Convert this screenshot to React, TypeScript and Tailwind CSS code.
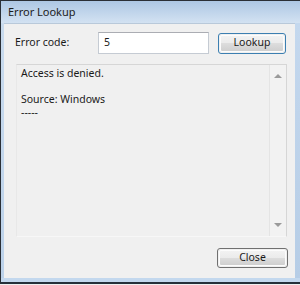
import React from "react";

const font = { fontFamily: '"Noto Sans", "Open Sans", sans-serif' };

function Btn({ label, w, h, def }: { label: string; w: string; h: string; def?: boolean }) {
  return (
    <div
      className={`${w} ${h} rounded-[3px] border ${def ? "border-[#3c7fb1]" : "border-[#707070]"} p-px`}
    >
      <div className="w-full h-full rounded-[2px] border border-[#fcfcfc] bg-[linear-gradient(to_bottom,#f2f2f2_0%,#ebebeb_50%,#dddddd_50%,#cfcfcf_100%)] flex items-center justify-center text-[10.5px] text-[#1a1a1a]">
        {label}
      </div>
    </div>
  );
}

export default function App() {
  return (
    <div className="w-[300px] h-[285px] bg-[#f0f0f0] flex flex-col" style={font}>
      <div className="w-full h-[284px] flex flex-col border-t border-l border-[#2a2f36] bg-[#c9dbee]">
        {/* title bar */}
        <div className="h-[22px] bg-[linear-gradient(to_bottom,#adc7e4,#d3e2f2)] flex items-center pl-[7px] text-[11px] text-[#1c1c1c] shrink-0">
          Error Lookup
        </div>
        <div className="flex-1 flex min-h-0">
          <div className="w-[3px] bg-[linear-gradient(to_bottom,#c9dbee,#bcd2ea)] shrink-0" />
          <div className="w-[291px] bg-[#f0f0f0] flex flex-col pt-[8px] pl-[11px] border-t border-[#b9c9da]">
            <div className="flex items-center h-[22px]">
              <div className="w-[83px] text-[10.5px] text-[#1a1a1a]">Error code:</div>
              <div className="w-[111px] h-[22px] bg-white border border-[#c5cbd3] border-t-[#abadb3] flex items-center pl-[5px] text-[10.5px] text-[#1a1a1a]">
                5
              </div>
              <div className="ml-[9px]">
                <Btn label="Lookup" w="w-[68px]" h="h-[21px]" def />
              </div>
            </div>
            <div className="mt-[10px] ml-[1px] w-[271px] h-[173px] border border-[#d6d6d6] border-b-[#f7f7f7] border-l-[#e8e8e8] bg-[#f0f0f0] flex">
              <div className="flex-1 pl-[4px] pt-[2px] text-[10.5px] leading-[13px] text-[#1a1a1a]">
                <div>Access is denied.</div>
                <div className="h-[13px]" />
                <div>Source: Windows</div>
                <div>-----</div>
              </div>
              <div className="w-[17px] border-l border-[#e4e4e4] bg-[#f2f2f2] flex flex-col items-center justify-between py-[8px]">
                <svg width="8" height="5" viewBox="0 0 8 5">
                  <path d="M0 5 L4 1 L8 5 Z" fill="#9a9a9a" />
                </svg>
                <svg width="8" height="5" viewBox="0 0 8 5">
                  <path d="M0 0 L4 4 L8 0 Z" fill="#9a9a9a" />
                </svg>
              </div>
            </div>
            <div className="mt-[11px] self-end mr-[7px]">
              <Btn label="Close" w="w-[71px]" h="h-[20px]" />
            </div>
          </div>
          <div className="flex-1 bg-[linear-gradient(to_bottom,#c4d8ee,#b6cde6)]" />
        </div>
        <div className="h-[4px] bg-[#c3d8ee] shrink-0" />
        <div className="h-[2px] bg-[#26303a] shrink-0" />
      </div>
    </div>
  );
}
